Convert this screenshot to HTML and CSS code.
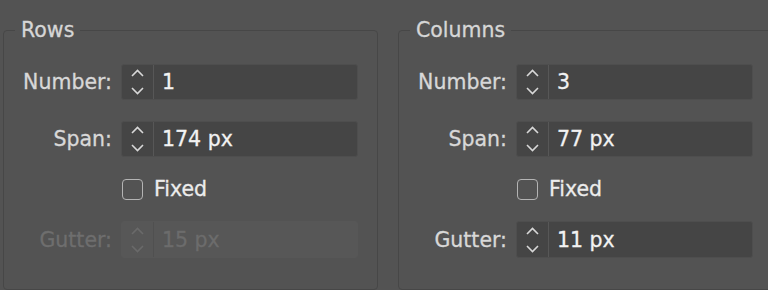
FILE: index.html
```
<!DOCTYPE html>
<html lang="en">
<head>
  <meta charset="UTF-8">
  <title>Grid Settings</title>
  <link rel="stylesheet" href="styles.css">
</head>
<body>

  <div class="panel">
    <!-- Rows -->
    <fieldset class="group">
      <legend>Rows</legend>
      <div class="form">
        <span class="label">Number:</span>
        <div class="field">
          <span class="spin"><svg width="31" height="34" viewBox="0 0 31 34"><path d="M10 11 L15.5 5.5 L21 11 M10 23 L15.5 28.5 L21 23"/></svg></span>
          <span class="value">1</span>
        </div>

        <span class="label">Span:</span>
        <div class="field">
          <span class="spin"><svg width="31" height="34" viewBox="0 0 31 34"><path d="M10 11 L15.5 5.5 L21 11 M10 23 L15.5 28.5 L21 23"/></svg></span>
          <span class="value">174 px</span>
        </div>

        <span></span>
        <label class="check"><span class="box"></span>Fixed</label>

        <span class="label dim">Gutter:</span>
        <div class="field disabled">
          <span class="spin"><svg width="31" height="34" viewBox="0 0 31 34"><path d="M10 11 L15.5 5.5 L21 11 M10 23 L15.5 28.5 L21 23"/></svg></span>
          <span class="value">15 px</span>
        </div>
      </div>
    </fieldset>

    <!-- Columns -->
    <fieldset class="group">
      <legend>Columns</legend>
      <div class="form">
        <span class="label">Number:</span>
        <div class="field">
          <span class="spin"><svg width="31" height="34" viewBox="0 0 31 34"><path d="M10 11 L15.5 5.5 L21 11 M10 23 L15.5 28.5 L21 23"/></svg></span>
          <span class="value">3</span>
        </div>

        <span class="label">Span:</span>
        <div class="field">
          <span class="spin"><svg width="31" height="34" viewBox="0 0 31 34"><path d="M10 11 L15.5 5.5 L21 11 M10 23 L15.5 28.5 L21 23"/></svg></span>
          <span class="value">77 px</span>
        </div>

        <span></span>
        <label class="check"><span class="box"></span>Fixed</label>

        <span class="label">Gutter:</span>
        <div class="field">
          <span class="spin"><svg width="31" height="34" viewBox="0 0 31 34"><path d="M10 11 L15.5 5.5 L21 11 M10 23 L15.5 28.5 L21 23"/></svg></span>
          <span class="value">11 px</span>
        </div>
      </div>
    </fieldset>
  </div>

</body>
</html>
```

FILE: styles.css
```
body {
  margin: 0;
  background-color: #535353;
  font-family: "DejaVu Sans", sans-serif;
  font-size: 20.5px;
  color: #d8d8d8;
  -webkit-text-stroke: 0.3px currentColor;
}
.panel {
  display: flex;
  gap: 20px;
  width: 768px;
  height: 290px;
  padding: 18px 0 0 3px;
  box-sizing: border-box;
  overflow: hidden;
}
.group {
  flex: 0 0 375px;
  box-sizing: border-box;
  margin: 0;
  padding: 22px 18px 27px 0;
  min-width: 0;
  border: 1px solid #474747;
  border-radius: 4px;
}
legend {
  margin-left: 11px;
  padding: 0 6px;
  line-height: 24px;
  color: #d6d6d6;
}
.form {
  display: grid;
  grid-template-columns: 108px 237px;
  grid-template-rows: 36px 36px 22px 37px;
  column-gap: 9px;
  row-gap: 21px;
  align-items: center;
}
.label {
  text-align: right;
  white-space: nowrap;
}
.dim {
  color: #6e6e6e;
}
.field {
  display: flex;
  height: 100%;
  box-sizing: border-box;
  border: 1px solid #4e4e4e;
  border-radius: 3px;
  background-color: #454545;
  color: #f2f2f2;
}
.spin {
  width: 31px;
  border-right: 1px solid #575757;
  display: flex;
  align-items: center;
}
.spin path {
  fill: none;
  stroke: #d8d8d8;
  stroke-width: 1.6;
}
.value {
  display: flex;
  align-items: center;
  padding-left: 8px;
}
.disabled {
  background-color: #575757;
  border-color: #575757;
  color: #6c6c6c;
}
.disabled .spin {
  border-right-color: #505050;
}
.disabled .spin path {
  stroke: #6a6a6a;
}
.check {
  display: flex;
  align-items: center;
  gap: 11px;
  margin-left: 1px;
  color: #ececec;
}
.box {
  width: 19px;
  height: 19px;
  border: 1px solid #b4b4b4;
  border-radius: 4px;
}
```
